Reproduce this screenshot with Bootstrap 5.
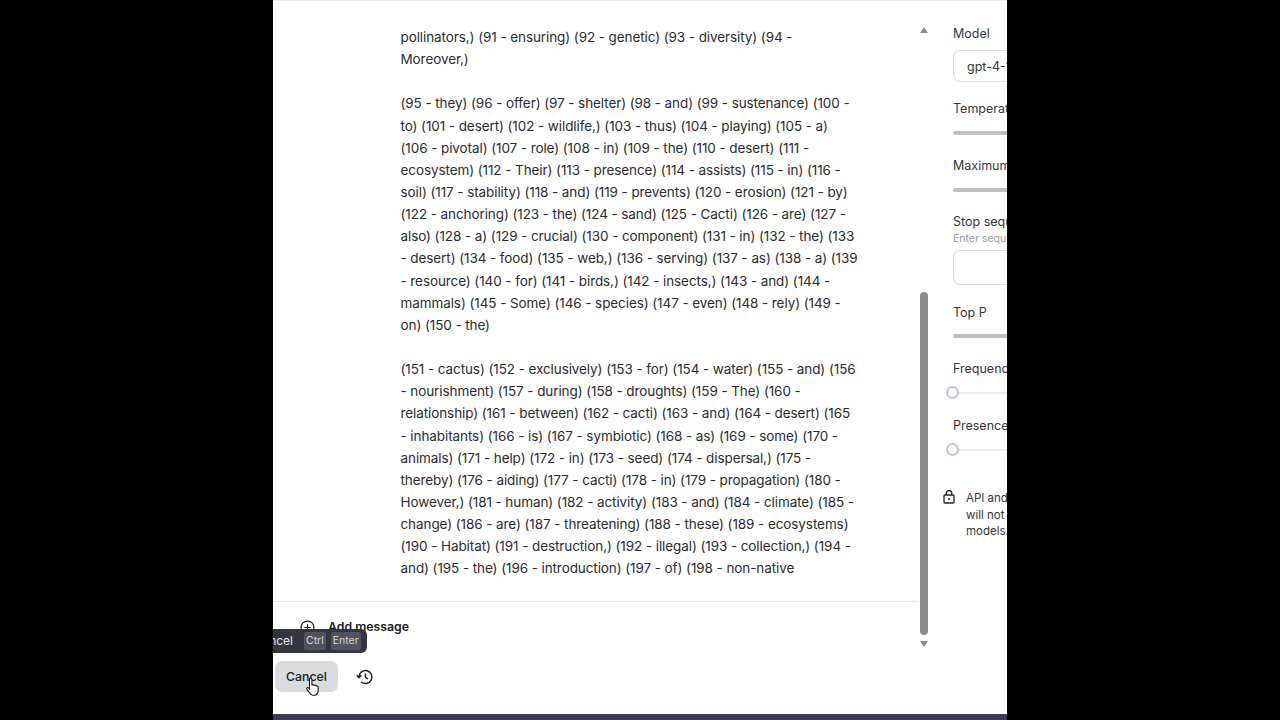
<!DOCTYPE html>
<html lang="en">
<head>
<meta charset="utf-8">
<title>Playground</title>
<link rel="stylesheet" href="https://cdn.jsdelivr.net/npm/bootstrap@5.3.0/dist/css/bootstrap.min.css">
<style>
html,body{height:100%;background:#000;overflow:hidden}
body{font-family:Inter,"Liberation Sans",sans-serif;color:#202123}
.stage{width:734px;height:720px;margin-left:273px;background:#fff;position:relative;overflow:hidden;border-top:1px solid #ececf1}
.mainrow{height:713px}
.chatcol{width:645px;flex:none}
.msgarea{height:601px;padding:25px 0 0 127.5px;font-size:13.5px;line-height:22.14px;color:#2b2c30;border-bottom:1px solid #e9e9ec;white-space:nowrap;letter-spacing:-.09px}
.msgarea p{margin:0 0 22.14px}
.addrow{padding:16px 0 0 27px;gap:13px;font-size:12.3px;font-weight:600;color:#202123}
.actrow{padding:25px 0 0 2px;gap:14px}
.cancelbtn{width:63px;height:31px;background:#d9dbe0;border:0;border-radius:7px;font-size:12.3px;font-weight:500;color:#202123;padding:1px 0 0}
.tipbox{position:absolute;left:-6px;top:628px;width:100px;height:24px;background:#33363f;color:#e6e7ea;border-radius:0 6px 6px 0;font-size:12px;gap:3px;overflow:hidden}
.tipword{width:26px;text-align:right;margin-right:8px;overflow:hidden;white-space:nowrap;direction:rtl}
.keycap{background:#50535c;color:#d4d6db;font-size:10.5px;padding:1px 2px;border-radius:2px;line-height:16px;margin-right:2px}
.handcur{position:absolute;left:32px;top:675px}
.scrollcol{width:12px;flex:none}
.arrowup{width:0;height:0;border-left:4px solid transparent;border-right:4px solid transparent;border-bottom:6px solid #8a8a8a;margin:26px auto 0}
.arrowdn{width:0;height:0;border-left:4px solid transparent;border-right:4px solid transparent;border-top:6px solid #8a8a8a;margin:6px auto 0}
.thumbbar{width:8px;height:343px;background:#8c8c8c;border-radius:4px;margin:259px auto 0}
.sidepanel{width:200px;flex:none;margin-left:23px;padding-top:24px;font-size:12.5px;color:#353740;white-space:nowrap}
.fieldlbl{line-height:17px}
.gap18{margin-top:18px}
.gap22{margin-top:22px}
.gap21{margin-top:21px}
.gap19{margin-top:19px}
.gap17{margin-top:17px}
.selbox{width:100px;height:32px;margin-top:8px;border:1px solid #d9d9e3;border-radius:7px;padding:7px 13px;line-height:17px}
.track{height:4px;width:100px;background:#bfc0c5;border-radius:2px;margin-top:14px}
.track-b{margin-top:13px}
.hint{font-size:10.5px;color:#9a9aa3;line-height:14px;margin-top:2px}
.emptybox{width:100px;height:35px;margin-top:4px;border:1px solid #d9d9e3;border-radius:7px}
.knobrow{height:14px;margin:9px 0 0 -7px;position:relative;width:107px}
.knobline{position:absolute;left:7px;right:0;top:6px;height:2px;background:#ececf1}
.knob{position:absolute;left:0;top:0;width:13px;height:13px;border:2px solid #c5c5d2;border-radius:50%;background:#fff}
.locknote{font-size:11.5px;line-height:16.6px;margin:33px 0 0 -10px;gap:11px;color:#353740}
.navystrip{height:6px;background:#343f56}
</style>
</head>
<body>
<div class="stage">
  <div class="d-flex mainrow">
    <div class="chatcol">
      <div class="msgarea">
        <p>pollinators,) (91 - ensuring) (92 - genetic) (93 - diversity) (94 -<br>Moreover,)</p>
        <p>(95 - they) (96 - offer) (97 - shelter) (98 - and) (99 - sustenance) (100 -<br>to) (101 - desert) (102 - wildlife,) (103 - thus) (104 - playing) (105 - a)<br>(106 - pivotal) (107 - role) (108 - in) (109 - the) (110 - desert) (111 -<br>ecosystem) (112 - Their) (113 - presence) (114 - assists) (115 - in) (116 -<br>soil) (117 - stability) (118 - and) (119 - prevents) (120 - erosion) (121 - by)<br>(122 - anchoring) (123 - the) (124 - sand) (125 - Cacti) (126 - are) (127 -<br>also) (128 - a) (129 - crucial) (130 - component) (131 - in) (132 - the) (133<br>- desert) (134 - food) (135 - web,) (136 - serving) (137 - as) (138 - a) (139<br>- resource) (140 - for) (141 - birds,) (142 - insects,) (143 - and) (144 -<br>mammals) (145 - Some) (146 - species) (147 - even) (148 - rely) (149 -<br>on) (150 - the)</p>
        <p>(151 - cactus) (152 - exclusively) (153 - for) (154 - water) (155 - and) (156<br>- nourishment) (157 - during) (158 - droughts) (159 - The) (160 -<br>relationship) (161 - between) (162 - cacti) (163 - and) (164 - desert) (165<br>- inhabitants) (166 - is) (167 - symbiotic) (168 - as) (169 - some) (170 -<br>animals) (171 - help) (172 - in) (173 - seed) (174 - dispersal,) (175 -<br>thereby) (176 - aiding) (177 - cacti) (178 - in) (179 - propagation) (180 -<br>However,) (181 - human) (182 - activity) (183 - and) (184 - climate) (185 -<br>change) (186 - are) (187 - threatening) (188 - these) (189 - ecosystems)<br>(190 - Habitat) (191 - destruction,) (192 - illegal) (193 - collection,) (194 -<br>and) (195 - the) (196 - introduction) (197 - of) (198 - non-native</p>
      </div>
      <div class="d-flex align-items-center addrow">
        <svg width="15" height="15" viewBox="0 0 16 16" fill="none" stroke="#202123" stroke-width="1.3"><circle cx="8" cy="8" r="6.9"/><path d="M8 4.5v7M4.5 8h7"/></svg>
        <span>Add message</span>
      </div>
      <div class="d-flex align-items-center actrow">
        <button type="button" class="btn cancelbtn">Cancel</button>
        <svg class="ms-1" width="18" height="18" viewBox="0 0 18 18" fill="none" stroke="#202123" stroke-width="1.5"><path d="M3 9a6.5 6.5 0 1 1 2 4.7"/><path d="M.8 7.2 3 9.6l2.4-2.2"/><path d="M9.4 5.4v4l2.6 1.5"/></svg>
      </div>
    </div>
    <div class="scrollcol">
      <div class="arrowup"></div>
      <div class="thumbbar"></div>
      <div class="arrowdn"></div>
    </div>
    <div class="sidepanel">
      <div class="fieldlbl">Model</div>
      <div class="selbox">gpt-4-1106-preview</div>
      <div class="fieldlbl gap18">Temperature</div>
      <div class="track"></div>
      <div class="fieldlbl gap22">Maximum length</div>
      <div class="track"></div>
      <div class="fieldlbl gap21">Stop sequences</div>
      <div class="hint">Enter sequence and press tab</div>
      <div class="emptybox"></div>
      <div class="fieldlbl gap19">Top P</div>
      <div class="track track-b"></div>
      <div class="fieldlbl gap22">Frequency penalty</div>
      <div class="knobrow"><div class="knobline"></div><div class="knob"></div></div>
      <div class="fieldlbl gap17">Presence penalty</div>
      <div class="knobrow"><div class="knobline"></div><div class="knob"></div></div>
      <div class="d-flex locknote">
        <svg class="flex-shrink-0" width="12" height="14" viewBox="0 0 12 14" fill="none" stroke="#202123" stroke-width="1.3"><rect x="1" y="5" width="10" height="8" rx="1"/><path d="M3.2 5V3.4a2.8 2.8 0 0 1 5.6 0V5"/><circle cx="6" cy="9" r="1" fill="#202123" stroke="none"/></svg>
        <div>API and Playground requests<br>will not be used to train our<br>models.</div>
      </div>
    </div>
  </div>
  <div class="navystrip"></div>
  <div class="d-flex align-items-center tipbox">
    <span class="tipword">Cancel</span>
    <span class="keycap">Ctrl</span><span class="keycap">Enter</span>
  </div>
  <svg class="handcur" width="17" height="22" viewBox="0 0 16 20"><path d="M5 1.5c1 0 1.5.6 1.5 1.5v5l1-.2c.8 0 1.2.3 1.4.7.8-.3 1.6 0 1.8.6.8-.2 1.6.2 1.7 1.2v3.5c0 2-1 3.5-2.6 4H7.4c-1.3 0-2-.8-3-2.3L1.6 12c-.5-.9.6-2 1.7-1.2l.9 1V3c0-1 0-1.5.8-1.5z" fill="#fff" stroke="#111" stroke-width="1"/></svg>
</div>
<script src="https://cdn.jsdelivr.net/npm/bootstrap@5.3.0/dist/js/bootstrap.bundle.min.js"></script>
</body>
</html>
